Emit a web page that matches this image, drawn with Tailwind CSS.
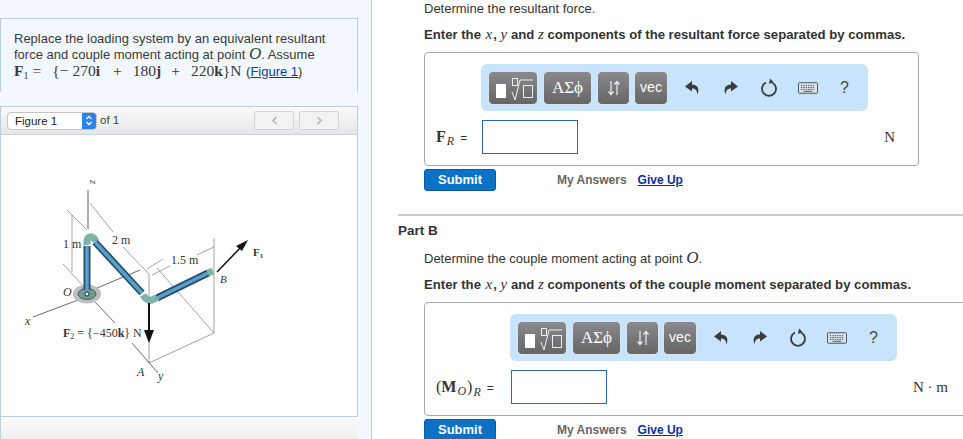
<!DOCTYPE html>
<html lang="en">
<head>
    <meta charset="UTF-8">
    <title>Part B</title>
    <script src="https://cdn.jsdelivr.net/npm/@tailwindcss/browser@4"></script>
</head>
<body class="bg-white overflow-hidden font-['Liberation_Sans',sans-serif] text-[13px] text-[#333]">
<div class="flex h-[439px] w-[963px] overflow-hidden">

	<!-- left column: statement and figure -->
	<aside class="w-[372px] h-full shrink-0 bg-[#f3f8fe] border-r border-[#b8d0e4] pt-[18px]">
		<div class="w-[358px] h-[74px] border border-b-0 border-[#b8d0e4] pl-[13px] pt-[12px] text-[13px] leading-[16px] text-[#3a3a3a]">
			<p class="h-[16px]">Replace the loading system by an equivalent resultant</p>
			<p class="h-[16px]">force and couple moment acting at point <i class="font-['Liberation_Serif',serif] text-[17px] leading-[14px]">O</i>. Assume</p>
			<p class="h-[16px] whitespace-nowrap"><span class="font-['Liberation_Serif',serif] text-[15.5px]"><b>F</b><span class="text-[10px] relative top-[3px]">1</span><span class="ml-[4px] mr-[11px]">=</span>{<span class="mr-[4px]">−</span>270<b>i</b><span class="ml-[13px] mr-[11px]">+</span>180<b>j</b><span class="ml-[10px] mr-[11px]">+</span>220<b>k</b>}N</span> <span class="ml-[1px]">(<a class="text-[#0b3fa5] underline">Figure 1</a>)</span></p>
		</div>
		<div class="w-[358px] mt-[14px] h-[311px] border border-[#b8d0e4] bg-white">
			<div class="h-[28px] flex items-center bg-gradient-to-b from-[#fafafa] to-[#e6e6e6] border-b border-[#c4d6e6] pl-[6px] pr-[18px]">
				<div class="flex w-[90px] h-[18px] rounded-[4px] border border-[#c4c4c4] bg-white overflow-hidden">
					<span class="flex-1 pl-[7px] text-[11.5px] leading-[16px] text-[#222]">Figure 1</span>
					<span class="w-[14px] flex items-center justify-center bg-[#2f80e8]">
						<svg width="8" height="11" viewBox="0 0 8 11" fill="none" stroke="#fff" stroke-width="1.4"><path d="M1.5 4 4 1.5 6.5 4M1.5 7 4 9.5 6.5 7"/></svg>
					</span>
				</div>
				<span class="ml-[3px] text-[11.5px] text-[#444]">of 1</span>
				<div class="ml-auto flex gap-[5px]">
					<span class="flex items-center justify-center w-[40px] h-[19px] rounded-[2px] border border-[#d4d4d4] bg-[#f2f2f2]">
						<svg width="7" height="9" viewBox="0 0 7 9" fill="none" stroke="#b5b5b5" stroke-width="1.6"><path d="M5.5 1 2 4.5 5.5 8"/></svg>
					</span>
					<span class="flex items-center justify-center w-[40px] h-[19px] rounded-[2px] border border-[#d4d4d4] bg-[#f2f2f2]">
						<svg width="7" height="9" viewBox="0 0 7 9" fill="none" stroke="#b5b5b5" stroke-width="1.6"><path d="M1.5 1 5 4.5 1.5 8"/></svg>
					</span>
				</div>
			</div>
			<!-- figure, drawn in page coordinates through the viewBox -->
			<svg width="356" height="280" viewBox="1 135 356 280" class="block font-['Liberation_Serif',serif]">
				<g fill="none" stroke="#8a8a8a" stroke-width="0.8">
					<path d="M67 210 87 230M63 264 85 288M72 215V272"/>
					<path d="M90 203 113 232M123 247 148 273"/>
					<path d="M147 269 163 259M152 275 170 266M197 255 214 247"/>
					<path d="M214 238V333M149 273V363M149 363 214 333M157 268 214 333"/>
					<path d="M95 302 115 323M132 343 158 373" stroke="#444"/>
					<path d="M33 317 78 300M97 288 140 270" stroke="#444"/>
				</g>
				<path d="M88 190V229" stroke="#777" stroke-width="1.2" fill="none"/>
				<ellipse cx="87" cy="294" rx="14" ry="9.5" fill="#bdbdbd"/>
				<ellipse cx="87" cy="294" rx="9" ry="5.5" fill="#6f9a94" stroke="#47645f"/>
				<circle cx="87" cy="294" r="2" fill="#fff" stroke="#223"/>
				<path d="M87 290V246" stroke="#24506f" stroke-width="7" fill="none"/>
				<path d="M87 290V246" stroke="#5aa0c8" stroke-width="3.5" fill="none"/>
				<path d="M95 242 142 293" stroke="#24506f" stroke-width="7" fill="none"/>
				<path d="M95 242 142 293" stroke="#5aa0c8" stroke-width="3.5" fill="none"/>
				<path d="M157 298 208 273" stroke="#24506f" stroke-width="7" fill="none"/>
				<path d="M157 298 208 273" stroke="#5aa0c8" stroke-width="3.5" fill="none"/>
				<path d="M87 245C86 236 92 234 96 241" stroke="#7fb2a8" stroke-width="7" fill="none"/>
				<path d="M143 295C147 302 153 301 157 297" stroke="#7fb2a8" stroke-width="7" fill="none"/>
				<path d="M208 273 213 271" stroke="#7fb2a8" stroke-width="7" fill="none"/>
				<path d="M217 272 243 245" stroke="#111" stroke-width="1.5" fill="none"/>
				<path d="M248 240 236 246 242 251Z" fill="#111"/>
				<path d="M149 303V334" stroke="#111" stroke-width="2" fill="none"/>
				<path d="M149 343 144 330H154Z" fill="#111"/>
				<g fill="#333" font-size="12">
					<text x="86" y="180" font-style="italic" font-size="11" transform="rotate(90 88 182)">z</text>
					<text x="63" y="248">1 m</text>
					<text x="112" y="244">2 m</text>
					<text x="171" y="264">1.5 m</text>
					<text x="253" y="256" font-weight="bold" font-size="11">F<tspan font-size="7" dy="2">1</tspan></text>
					<text x="220" y="283" font-style="italic" font-size="11">B</text>
					<text x="63" y="296" font-style="italic">O</text>
					<text x="25" y="325" font-style="italic">x</text>
					<text x="63" y="337"><tspan font-weight="bold">F</tspan><tspan font-size="8" dy="2">2</tspan><tspan dy="-2"> = {−450</tspan><tspan font-weight="bold">k</tspan>} N</text>
					<text x="137" y="376" font-style="italic">A</text>
					<text x="158" y="380" font-style="italic">y</text>
				</g>
			</svg>
		</div>
		<div class="w-[358px] h-[23px] border-l border-[#b8d0e4] bg-gradient-to-b from-[#fbfbfb] to-[#eeeeee]"></div>
	</aside>

	<!-- right column: parts -->
	<main class="flex-1 min-w-0 pl-[52px]">
		<p class="mt-[1px] leading-[15px]">Determine the resultant force.</p>
		<p class="mt-[11px] leading-[15px] text-[13.15px] font-bold whitespace-nowrap">Enter the <i class="font-['Liberation_Serif',serif] font-normal text-[15px] mx-[1px]">x</i>, <i class="font-['Liberation_Serif',serif] font-normal text-[15px]">y</i> and <i class="font-['Liberation_Serif',serif] font-normal text-[15px]">z</i> components of the resultant force separated by commas.</p>

		<div class="mt-[10px] w-[495px] h-[114px] rounded-[4px] border border-[#aaa] pt-[11px] pl-[56px]">
			<div class="flex items-center w-[387px] h-[47px] rounded-[6px] bg-[#c7e4fc] pl-[7px]">
				<span class="flex items-center justify-center w-[50px] h-[34px] rounded-[5px] bg-gradient-to-b from-[#8a8a8e] to-[#666] border border-[#d8e6f0]">
					<svg width="48" height="32" viewBox="1 1 48 32" fill="none" stroke="#eee"><rect x="8" y="13" width="10" height="14" fill="#fff" stroke="none"/><rect x="24.5" y="7.5" width="5" height="7"/><path d="M24 21 27 29 32 9H45"/><rect x="35.5" y="14.5" width="9" height="12"/></svg>
				</span>
				<span class="ml-[5px] flex items-center justify-center w-[49px] h-[34px] rounded-[5px] bg-gradient-to-b from-[#8a8a8e] to-[#666] border border-[#d8e6f0] text-white font-['Liberation_Serif',serif] text-[17px]">ΑΣϕ</span>
				<span class="ml-[5px] flex items-center justify-center w-[33px] h-[34px] rounded-[5px] bg-gradient-to-b from-[#8a8a8e] to-[#666] border border-[#d8e6f0]">
					<svg width="14" height="16" viewBox="0 0 14 16" fill="none" stroke="#eee" stroke-width="1.2"><path d="M4 1V14M1.5 11.5 4 14.5 6.5 11.5M10 15V2M7.5 4.5 10 1.5 12.5 4.5"/></svg>
				</span>
				<span class="ml-[4px] flex items-center justify-center w-[34px] h-[34px] rounded-[5px] bg-gradient-to-b from-[#8a8a8e] to-[#666] border border-[#d8e6f0] text-white text-[14px]">vec</span>
				<span class="ml-[16px] w-[16px] flex justify-center">
					<svg width="16" height="16" viewBox="0 0 16 16" fill="#3c3c3c"><path d="M8 1 1 6.5 8 11.5V8.5C11 8.5 13 10 13.5 14.5 16 8 13 4.5 8 4.5Z"/></svg>
				</span>
				<span class="ml-[23px] w-[16px] flex justify-center">
					<svg width="16" height="16" viewBox="0 0 16 16" fill="#3c3c3c"><path d="M8 1 15 6.5 8 11.5V8.5C5 8.5 3 10 2.5 14.5 0 8 3 4.5 8 4.5Z"/></svg>
				</span>
				<span class="ml-[21px] w-[18px] flex justify-center">
					<svg width="18" height="19" viewBox="0 0 18 19" fill="none" stroke="#3c3c3c" stroke-width="1.8"><path d="M6 4.5A7 7 0 1 0 12 4.5"/><path d="M10 0.5 13.5 4 9 6Z" fill="#3c3c3c" stroke="none"/></svg>
				</span>
				<span class="ml-[20px] w-[20px] flex justify-center">
					<svg width="21" height="12" viewBox="0 0 21 12" fill="#d6e4ef" stroke="#4a4a4a"><rect x="0.5" y="0.5" width="20" height="11" rx="1"/><path d="M3 3.5H18M3 5.5H18M3 7.5H18" stroke-dasharray="1.5 1" stroke="#555"/><path d="M6 9.5H15" stroke="#555"/></svg>
				</span>
				<span class="ml-[22px] text-[16px] text-[#444]">?</span>
			</div>
			<div class="flex items-center mt-[9px] -ml-[45px]">
				<span class="w-[45px] font-['Liberation_Serif',serif] text-[16px] text-[#333] whitespace-nowrap"><b>F</b><i class="text-[12px] relative top-[3px] ml-[1px]">R</i><span class="ml-[6px] font-['Liberation_Sans',sans-serif] text-[12px]">=</span></span>
				<span class="ml-[1px] w-[96px] h-[34px] border border-[#2a63c9] bg-white"></span>
				<span class="ml-auto mr-[23px] font-['Liberation_Serif',serif] text-[15px]">N</span>
			</div>
		</div>

		<div class="mt-[3px] flex items-center h-[22px]">
			<button class="w-[72px] h-[22px] rounded-[3px] border border-[#0a5ba0] bg-[#0b72c6] text-white text-[13px] font-bold">Submit</button>
			<span class="ml-[61px] text-[12px] font-bold text-[#666]">My Answers</span>
			<a class="ml-[11px] text-[12px] font-bold text-[#0b2e9c] underline">Give Up</a>
		</div>

		<div class="mt-[23px] -ml-[26px] h-[2px] bg-[#ccc]"></div>
		<h2 class="-ml-[26px] mt-[7px] leading-[16px] text-[13.5px] font-bold">Part B</h2>
		<p class="mt-[11px] h-[18px] leading-[18px]">Determine the couple moment acting at point <i class="font-['Liberation_Serif',serif] text-[17px] leading-[14px]">O</i>.</p>
		<p class="mt-[9px] h-[15px] leading-[15px] text-[13.15px] font-bold whitespace-nowrap">Enter the <i class="font-['Liberation_Serif',serif] font-normal text-[15px] mx-[1px]">x</i>, <i class="font-['Liberation_Serif',serif] font-normal text-[15px]">y</i> and <i class="font-['Liberation_Serif',serif] font-normal text-[15px]">z</i> components of the couple moment separated by commas.</p>

		<div class="mt-[10px] w-[560px] h-[114px] rounded-[4px] border border-[#aaa] pt-[11px] pl-[85px]">
			<div class="flex items-center w-[387px] h-[47px] rounded-[6px] bg-[#c7e4fc] pl-[7px]">
				<span class="flex items-center justify-center w-[50px] h-[34px] rounded-[5px] bg-gradient-to-b from-[#8a8a8e] to-[#666] border border-[#d8e6f0]">
					<svg width="48" height="32" viewBox="1 1 48 32" fill="none" stroke="#eee"><rect x="8" y="13" width="10" height="14" fill="#fff" stroke="none"/><rect x="24.5" y="7.5" width="5" height="7"/><path d="M24 21 27 29 32 9H45"/><rect x="35.5" y="14.5" width="9" height="12"/></svg>
				</span>
				<span class="ml-[5px] flex items-center justify-center w-[49px] h-[34px] rounded-[5px] bg-gradient-to-b from-[#8a8a8e] to-[#666] border border-[#d8e6f0] text-white font-['Liberation_Serif',serif] text-[17px]">ΑΣϕ</span>
				<span class="ml-[5px] flex items-center justify-center w-[33px] h-[34px] rounded-[5px] bg-gradient-to-b from-[#8a8a8e] to-[#666] border border-[#d8e6f0]">
					<svg width="14" height="16" viewBox="0 0 14 16" fill="none" stroke="#eee" stroke-width="1.2"><path d="M4 1V14M1.5 11.5 4 14.5 6.5 11.5M10 15V2M7.5 4.5 10 1.5 12.5 4.5"/></svg>
				</span>
				<span class="ml-[4px] flex items-center justify-center w-[34px] h-[34px] rounded-[5px] bg-gradient-to-b from-[#8a8a8e] to-[#666] border border-[#d8e6f0] text-white text-[14px]">vec</span>
				<span class="ml-[16px] w-[16px] flex justify-center">
					<svg width="16" height="16" viewBox="0 0 16 16" fill="#3c3c3c"><path d="M8 1 1 6.5 8 11.5V8.5C11 8.5 13 10 13.5 14.5 16 8 13 4.5 8 4.5Z"/></svg>
				</span>
				<span class="ml-[23px] w-[16px] flex justify-center">
					<svg width="16" height="16" viewBox="0 0 16 16" fill="#3c3c3c"><path d="M8 1 15 6.5 8 11.5V8.5C5 8.5 3 10 2.5 14.5 0 8 3 4.5 8 4.5Z"/></svg>
				</span>
				<span class="ml-[21px] w-[18px] flex justify-center">
					<svg width="18" height="19" viewBox="0 0 18 19" fill="none" stroke="#3c3c3c" stroke-width="1.8"><path d="M6 4.5A7 7 0 1 0 12 4.5"/><path d="M10 0.5 13.5 4 9 6Z" fill="#3c3c3c" stroke="none"/></svg>
				</span>
				<span class="ml-[20px] w-[20px] flex justify-center">
					<svg width="21" height="12" viewBox="0 0 21 12" fill="#d6e4ef" stroke="#4a4a4a"><rect x="0.5" y="0.5" width="20" height="11" rx="1"/><path d="M3 3.5H18M3 5.5H18M3 7.5H18" stroke-dasharray="1.5 1" stroke="#555"/><path d="M6 9.5H15" stroke="#555"/></svg>
				</span>
				<span class="ml-[22px] text-[16px] text-[#444]">?</span>
			</div>
			<div class="flex items-center mt-[9px] -ml-[74px]">
				<span class="w-[74px] font-['Liberation_Serif',serif] text-[16px] text-[#333] whitespace-nowrap">(<b>M</b><i class="text-[12px] relative top-[3px] ml-[1px]">O</i><span class="ml-[1px]">)</span><i class="text-[12px] relative top-[4px] ml-[1px]">R</i><span class="ml-[6px] font-['Liberation_Sans',sans-serif] text-[12px]">=</span></span>
				<span class="ml-[1px] w-[96px] h-[34px] border border-[#2a63c9] bg-white"></span>
				<span class="ml-auto mr-[35px] font-['Liberation_Serif',serif] text-[15px]">N · m</span>
			</div>
		</div>

		<div class="mt-[3px] flex items-center h-[22px]">
			<button class="w-[72px] h-[22px] rounded-[3px] border border-[#0a5ba0] bg-[#0b72c6] text-white text-[13px] font-bold">Submit</button>
			<span class="ml-[61px] text-[12px] font-bold text-[#666]">My Answers</span>
			<a class="ml-[11px] text-[12px] font-bold text-[#0b2e9c] underline">Give Up</a>
		</div>
	</main>
</div>
</body>
</html>
